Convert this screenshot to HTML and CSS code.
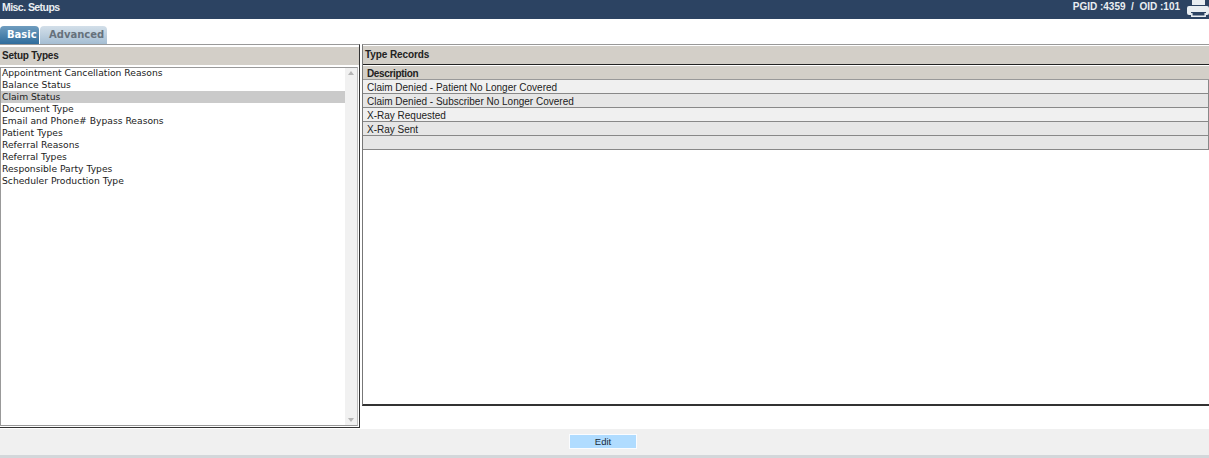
FILE: index.html
```html
<!DOCTYPE html>
<html>
<head>
<meta charset="utf-8">
<title>Misc. Setups</title>
<link rel="stylesheet" href="styles.css">
</head>
<body>

<div class="topbar">
	<div class="page_title">Misc. Setups</div>
	<div class="top_right">
		<span class="ids">PGID :4359 &nbsp;/&nbsp; OID :101</span>
		<svg class="printer" width="22" height="18" viewBox="0 0 22 18">
			<path fill="#e9eef2" d="M5 0h13v5H5z"/>
			<path fill="#e9eef2" d="M2 6h18a2 2 0 0 1 2 2v5a2 2 0 0 1-2 2h-1v-3H4v3H2a2 2 0 0 1-2-2V8a2 2 0 0 1 2-2z"/>
			<path fill="none" stroke="#e9eef2" stroke-width="1.5" d="M4.8 13v3.2h13.4V13"/>
		</svg>
	</div>
</div>

<div class="tabs">
	<div class="tab active">Basic</div>
	<div class="tab">Advanced</div>
</div>

<div class="panels">
	<div class="panel left_panel">
		<div class="panel_title">Setup Types</div>
		<div class="listbox">
			<ul class="types">
				<li>Appointment Cancellation Reasons</li>
				<li>Balance Status</li>
				<li class="selected">Claim Status</li>
				<li>Document Type</li>
				<li>Email and Phone# Bypass Reasons</li>
				<li>Patient Types</li>
				<li>Referral Reasons</li>
				<li>Referral Types</li>
				<li>Responsible Party Types</li>
				<li>Scheduler Production Type</li>
			</ul>
			<div class="scrollbar">
				<span class="arrow_up"></span>
				<span class="arrow_down"></span>
			</div>
		</div>
	</div>

	<div class="panel right_panel">
		<div class="panel_title records_title">Type Records</div>
		<div class="records">
			<table>
				<tr><th>Description</th></tr>
				<tr><td>Claim Denied - Patient No Longer Covered</td></tr>
				<tr class="alt"><td>Claim Denied - Subscriber No Longer Covered</td></tr>
				<tr><td>X-Ray Requested</td></tr>
				<tr class="alt"><td>X-Ray Sent</td></tr>
				<tr class="alt"><td>&nbsp;</td></tr>
			</table>
		</div>
	</div>
</div>

<div class="footer">
	<button class="edit">Edit</button>
</div>

</body>
</html>
```

FILE: styles.css
```css
html, body {
	margin: 0;
	padding: 0;
	height: 458px;
	overflow: hidden;
	background: white;
	font-family: "Liberation Sans", Arial, sans-serif;
	color: #222;
}

.topbar {
	height: 19px;
	background: #2c4362;
	color: #e9eef2;
	display: flex;
	justify-content: space-between;
	font-size: 10.5px;
	font-weight: bold;
}

.page_title {
	padding: 1px 0 0 2px;
	letter-spacing: -0.55px;
}

.top_right {
	display: flex;
	font-size: 10px;
	gap: 7px;
}

.ids {
	padding-top: 1px;
}

.tabs {
	height: 19px;
	margin-top: 6px;
	display: flex;
	gap: 1px;
	align-items: flex-end;
	font-family: "DejaVu Sans", sans-serif;
	font-size: 10px;
	font-weight: bold;
}

.tab {
	width: 67px;
	height: 18px;
	line-height: 17px;
	padding-left: 9px;
	box-sizing: border-box;
	border-radius: 4px 4px 0 0;
	background: linear-gradient(#d3dfe9, #a5bed3);
	color: #66717c;
}

.tab.active {
	width: 39px;
	padding-left: 7px;
	background: linear-gradient(#6f9dbf, #2f6c9b);
	color: white;
}

.panels {
	height: 384px;
	display: flex;
	gap: 2px;
	align-items: flex-start;
}

.panel {
	box-sizing: border-box;
	border-top: 1px solid #999;
}

.left_panel {
	width: 360px;
	height: 384px;
	border-right: 1px solid #333;
	border-bottom: 1px solid #333;
	padding-top: 2px;
}

.right_panel {
	flex: 1;
	height: 362px;
	border-left: 1px solid #777;
	border-bottom: 2px solid #333;
	padding-top: 1px;
}

.panel_title {
	height: 18px;
	line-height: 18px;
	background: #d3cfc8;
	font-size: 10px;
	font-weight: bold;
	padding-left: 2px;
	letter-spacing: -0.2px;
}

.records_title {
	border-bottom: 1px solid #222;
	letter-spacing: -0.1px;
}

.listbox {
	box-sizing: border-box;
	height: 359px;
	margin: 2px 1px 0 0;
	border: 1px solid #999;
	border-right-color: #bbb;
	display: flex;
}

.types {
	list-style: none;
	margin: -1px 0 0 0;
	padding: 0;
	flex: 1;
	font-family: "DejaVu Sans", sans-serif;
	font-size: 9.2px;
}

.types li {
	height: 12px;
	line-height: 12px;
	padding-left: 1px;
}

.types li.selected {
	background: #cacaca;
}

.scrollbar {
	width: 12px;
	background: #f1f1f1;
	display: flex;
	flex-direction: column;
	justify-content: space-between;
	align-items: center;
	padding: 3px 0;
	box-sizing: border-box;
}

.arrow_up {
	border: 3px solid transparent;
	border-top: 0;
	border-bottom: 4px solid #b5b5b5;
}

.arrow_down {
	border: 3px solid transparent;
	border-bottom: 0;
	border-top: 4px solid #b5b5b5;
}

.records {
	margin-top: 1px;
}

.records table {
	width: 100%;
	border-collapse: collapse;
	font-size: 10px;
}

.records th {
	height: 12px;
	background: #d3cfc8;
	text-align: left;
	padding: 1px 0 0 4px;
	border-bottom: 1px solid #999;
	letter-spacing: -0.35px;
}

.records td {
	height: 12px;
	padding: 1px 0 0 4px;
	background: #f0f0f0;
	border-bottom: 1px solid #888;
	border-right: 1px solid #888;
}

.records tr.alt td {
	background: #e6e6e6;
}

.footer {
	margin-top: 1px;
	height: 26px;
	background: #f0f0f0;
	border-bottom: 3px solid #d3d7da;
	display: flex;
	justify-content: center;
	align-items: center;
}

.edit {
	width: 68px;
	height: 15px;
	margin: -1px 3px 0 0;
	padding: 0;
	background: #b0dcff;
	border: 1px solid #fafcff;
	font-family: "Liberation Sans", Arial, sans-serif;
	font-size: 9.5px;
	color: #1a2b3a;
}
```
